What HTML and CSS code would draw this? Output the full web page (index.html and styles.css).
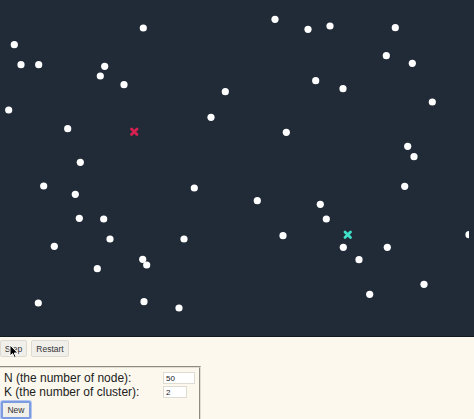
FILE: index.html
```html
<!DOCTYPE html>
<html>
<head>
<meta charset="utf-8">
<link rel="stylesheet" href="styles.css">
</head>
<body>
<svg class="board" width="474" height="337" viewBox="0 0 474 337">
  <rect width="474" height="337" fill="#212b38"/>
  <rect y="336" width="474" height="1" fill="#141a22"/>
  <g fill="#ffffff">
    <circle cx="143.3" cy="28" r="3.6"/>
    <circle cx="275" cy="19.3" r="3.6"/>
    <circle cx="308" cy="29.3" r="3.6"/>
    <circle cx="330" cy="26" r="3.6"/>
    <circle cx="395.3" cy="27.7" r="3.6"/>
    <circle cx="14.3" cy="44.7" r="3.6"/>
    <circle cx="21" cy="64.7" r="3.6"/>
    <circle cx="38.7" cy="64.7" r="3.6"/>
    <circle cx="104.7" cy="66.3" r="3.6"/>
    <circle cx="100.3" cy="76" r="3.6"/>
    <circle cx="124" cy="84.7" r="3.6"/>
    <circle cx="386.3" cy="55.7" r="3.6"/>
    <circle cx="412.3" cy="63.3" r="3.6"/>
    <circle cx="315.7" cy="80.7" r="3.6"/>
    <circle cx="343" cy="88.7" r="3.6"/>
    <circle cx="225.3" cy="91.7" r="3.6"/>
    <circle cx="8.7" cy="110" r="3.6"/>
    <circle cx="432.3" cy="102" r="3.6"/>
    <circle cx="211" cy="117.3" r="3.6"/>
    <circle cx="67.7" cy="128.7" r="3.6"/>
    <circle cx="286.3" cy="132.3" r="3.6"/>
    <circle cx="407.7" cy="146.3" r="3.6"/>
    <circle cx="414" cy="156.7" r="3.6"/>
    <circle cx="80.3" cy="162.3" r="3.6"/>
    <circle cx="43.7" cy="186" r="3.6"/>
    <circle cx="75.3" cy="194.3" r="3.6"/>
    <circle cx="194.3" cy="188" r="3.6"/>
    <circle cx="257.3" cy="200.7" r="3.6"/>
    <circle cx="320.3" cy="204.3" r="3.6"/>
    <circle cx="404.7" cy="186.3" r="3.6"/>
    <circle cx="79.3" cy="218.3" r="3.6"/>
    <circle cx="103.7" cy="219" r="3.6"/>
    <circle cx="326.3" cy="219" r="3.6"/>
    <circle cx="110" cy="239" r="3.6"/>
    <circle cx="184" cy="239" r="3.6"/>
    <circle cx="54.3" cy="246.3" r="3.6"/>
    <circle cx="283" cy="235.7" r="3.6"/>
    <circle cx="343.3" cy="247.3" r="3.6"/>
    <circle cx="387.3" cy="247.3" r="3.6"/>
    <circle cx="142.7" cy="259.3" r="3.6"/>
    <circle cx="146.7" cy="265" r="3.6"/>
    <circle cx="359" cy="259.7" r="3.6"/>
    <circle cx="97.3" cy="268.7" r="3.6"/>
    <circle cx="424" cy="284.3" r="3.6"/>
    <circle cx="369.7" cy="294.3" r="3.6"/>
    <circle cx="38.3" cy="303" r="3.6"/>
    <circle cx="144" cy="301.7" r="3.6"/>
    <circle cx="179" cy="308" r="3.6"/>
    <path d="M469 231.1 A3.6 3.6 0 0 0 469 238.3 Z"/>
  </g>
  <g stroke-width="2.8" stroke-linecap="round">
    <path d="M131.5 129 L137 134.5 M137 129 L131.5 134.5" stroke="#d6204f"/>
    <path d="M345 232 L350.5 237.5 M350.5 232 L345 237.5" stroke="#3fe0c8"/>
  </g>
</svg>
<div class="controls">
  <button class="btn">Step</button>
  <button class="btn">Restart</button>
</div>
<fieldset class="panel">
  <div class="row">
    <span class="label">N (the number of node):</span>
    <input class="num wide" type="text" value="50">
  </div>
  <div class="row">
    <span class="label">K (the number of cluster):</span>
    <input class="num narrow" type="text" value="2">
  </div>
  <button class="btn new">New</button>
</fieldset>
<svg class="cursor" width="10" height="15" viewBox="0 0 10 15">
  <path d="M1 1 L1 12 L3.6 9.6 L5.6 14 L7.2 13.3 L5.3 9 L8.8 9 Z" fill="#000" stroke="#fff" stroke-width="1"/>
</svg>
</body>
</html>
```
FILE: styles.css
```css
html, body {
  margin: 0;
  padding: 0;
}
body {
  background: #fcf8ee;
  font-family: "Liberation Sans", Arial, sans-serif;
  color: #222;
  width: 474px;
  height: 419px;
  overflow: hidden;
  position: relative;
}
.board {
  display: block;
}
.controls {
  display: flex;
  gap: 4px;
  padding: 3px 0 0 0;
  height: 17px;
}
.btn {
  font-family: "Liberation Sans", Arial, sans-serif;
  font-size: 8.5px;
  color: #333;
  background: #f1efea;
  border: 1px solid #dddad2;
  border-radius: 2px;
  height: 17px;
  padding: 0 5px;
  margin: 0;
}
.controls .btn:first-child {
  width: 27px;
  padding: 0;
}
.controls .btn:nth-child(2) {
  width: 38px;
  padding: 0;
}
.panel {
  margin: 9px 0 0 -3px;
  width: 204px;
  border: 2px groove #e2ddd0;
  border-bottom: none;
  padding: 3px 0 0 5px;
  box-sizing: border-box;
  height: 60px;
}
.row {
  display: grid;
  grid-template-columns: 159px auto;
  align-items: center;
  height: 14px;
  font-family: "Liberation Sans", Arial, sans-serif;
  font-size: 12px;
  line-height: 14px;
}
.label {
  white-space: nowrap;
  display: inline-block;
  transform: scaleY(1.08);
  transform-origin: left center;
}
.num {
  font-family: "Liberation Sans", Arial, sans-serif;
  font-size: 8px;
  height: 12px;
  box-sizing: border-box;
  border: 1px solid #dedbd3;
  background: #fff;
  padding: 0 2px;
  margin: 0;
  color: #222;
}
.wide { width: 32px; }
.narrow { width: 24px; }
.new {
  margin: 0 0 0 -3px;
  width: 30px;
  height: 18px;
  padding: 0;
  border: 2px solid #7d9be0;
  border-radius: 2px;
  box-shadow: 0 0 0 1px #b5c7ef;
}
.cursor {
  position: absolute;
  left: 9px;
  top: 344px;
}
```
